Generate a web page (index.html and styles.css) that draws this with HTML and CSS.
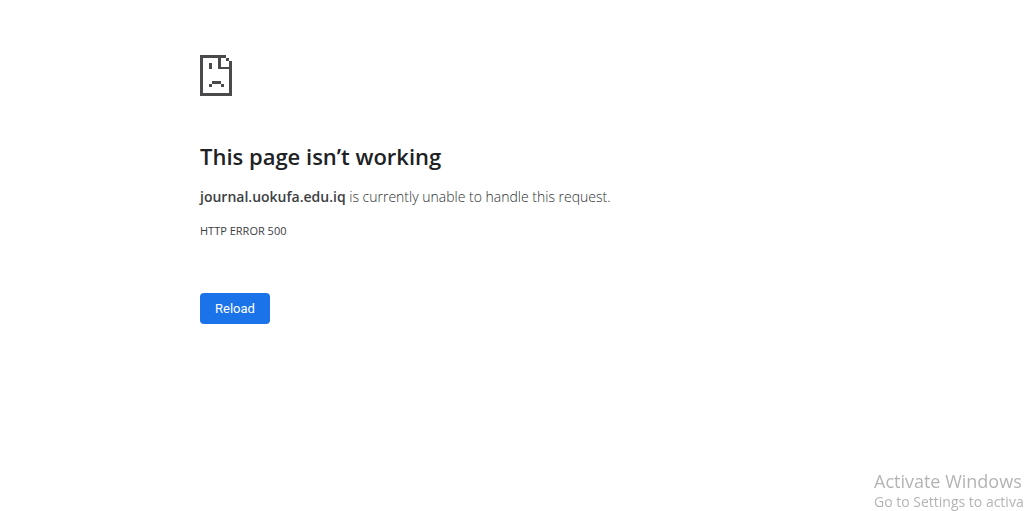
FILE: index.html
```html
<!DOCTYPE html>
<html lang="en">
<head>
    <meta charset="UTF-8">
    <meta name="viewport" content="width=device-width, initial-scale=1.0">
    <title>journal.uokufa.edu.iq</title>
    <link rel="stylesheet" href="styles.css">
</head>
<body>
    <main class="container">
        <svg class="icon" viewBox="0 0 32 41" width="32" height="41" shape-rendering="crispEdges" aria-hidden="true">
            <!-- page outline and folded corner -->
            <path d="M0 0H26V3H29V6H32V41H0ZM3 3V38H29V14H18V3ZM21 3V12H29V6H26V3Z" fill-rule="evenodd"/>
            <!-- eye and mouth -->
            <path d="M9 8H12V14H9ZM12 26H21V29H12ZM9 29H12V32H9ZM21 29H24V32H21Z"/>
        </svg>

        <h1>This page isn’t working</h1>
        <p class="message"><strong>journal.uokufa.edu.iq</strong> is currently unable to handle this request.</p>
        <p class="error-code">HTTP ERROR 500</p>

        <button class="btn" type="button" id="reload-btn">Reload</button>
    </main>

    <aside class="watermark">
        <p class="watermark-title">Activate Windows</p>
        <p class="watermark-text">Go to Settings to activa</p>
    </aside>

    <script>
        document.getElementById('reload-btn').addEventListener('click', function() {
            location.reload();
        });
    </script>
</body>
</html>
```

FILE: styles.css
```css
* {
    margin: 0;
    padding: 0;
    box-sizing: border-box;
}

body {
    background-color: #fff;
    color: #3c4043;
    font-family: 'Open Sans', 'Noto Sans', sans-serif;
}

.container {
    max-width: 624px;
    margin: 0 auto;
    padding-top: 55px;
}

.icon {
    display: block;
    margin-bottom: 44px;
    fill: #4a4a4c;
}

h1 {
    margin-bottom: 15px;
    color: #202124;
    font-size: 22px;
    font-weight: 600;
    line-height: 32px;
}

.message {
    margin-bottom: 14px;
    color: #2c3033;
    font-size: 14px;
    font-weight: 300;
    line-height: 20px;
}

.message strong {
    color: #3c4043;
    font-weight: 600;
}

.error-code {
    margin-bottom: 52px;
    font-size: 11px;
    line-height: 20px;
}

.btn {
    padding: 6px 15px;
    background-color: #1a73e8;
    color: #fff;
    border: none;
    border-radius: 4px;
    font-family: Roboto, sans-serif;
    font-size: 13px;
    line-height: 19px;
    cursor: pointer;
}

.btn:hover {
    background-color: #1765cc;
}

/* stays in the bottom corner of the window */
.watermark {
    position: fixed;
    bottom: 0;
    left: calc(100% - 150px);
    width: 150px;
    overflow: hidden;
    color: #b4b4b4;
    white-space: nowrap;
    pointer-events: none;
}

.watermark-title {
    font-size: 18px;
    line-height: 24px;
}

.watermark-text {
    font-size: 14px;
    line-height: 18px;
}
```
